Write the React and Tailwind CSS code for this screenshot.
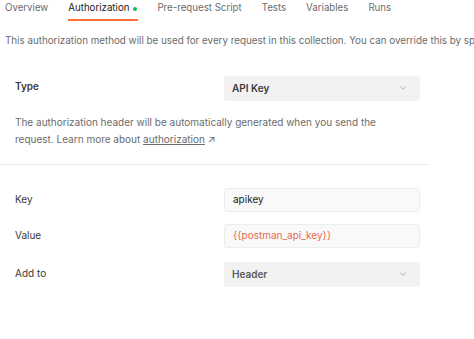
import { ChevronDown } from "lucide-react";

const tabs = ["Overview", "Authorization", "Pre-request Script", "Tests", "Variables", "Runs"];

function Select({ value, dark }) {
  return (
    <div className="flex items-center justify-between w-[196px] h-[25px] bg-[#f2f2f2] rounded-[3px] pl-[8px] pr-[12px]">
      <span className={dark ? "text-[10px] font-semibold text-[#3a3a3a]" : "text-[10px] font-semibold text-[#5a5a5a]"}>{value}</span>
      <ChevronDown size={10} strokeWidth={1.5} className="text-[#8a8a8a]" />
    </div>
  );
}

function Input({ value, orange }) {
  return (
    <div className="flex items-center w-[196px] h-[24px] bg-[#f9f9f9] border border-[#ededed] rounded-[3px] pl-[8px]">
      <span className={orange ? "text-[10px] text-[#e8694a]" : "text-[10px] text-[#212121]"}>{value}</span>
    </div>
  );
}

function Row({ label, className, children }) {
  return (
    <div className={"flex items-start " + (className || "")}>
      <span className="w-[224px] pl-[15px] pt-[4px] text-[10px] text-[#3a3a3a]">{label}</span>
      {children}
    </div>
  );
}

export default function App() {
  return (
    <div className="w-[474px] h-[339px] bg-white overflow-hidden font-['Inter',sans-serif]">
      <div className="flex h-[22px] pl-[5px] gap-[20px]">
        {tabs.map((t) => (
          <div key={t} className="relative flex items-start pt-[1px]">
            <span className={t === "Authorization" ? "text-[9.7px] text-[#212121]" : "text-[9.7px] text-[#6b6b6b]"}>{t}</span>
            {t === "Authorization" && (
              <>
                <span className="ml-[4px] mt-[6px] w-[4px] h-[4px] rounded-full bg-[#0cbb52]" />
                <span className="absolute left-0 right-[-1px] top-[19px] h-[2px] bg-[#ff6c37]" />
              </>
            )}
          </div>
        ))}
      </div>
      <p className="mt-[12px] pl-[5px] text-[9.8px] text-[#6b6b6b] whitespace-nowrap">
        This authorization method will be used for every request in this collection. You can override this by specifying one in the request.
      </p>
      <div className="w-[430px] border-b border-[#ededed] pb-[16px]">
        <div className="flex items-start mt-[27px]">
          <span className="w-[224px] pl-[15px] pt-[3px] text-[10px] font-semibold text-[#3a3a3a]">Type</span>
          <Select value="API Key" dark />
        </div>
        <p className="mt-[13px] pl-[15px] pr-[40px] text-[10px] leading-[17px] text-[#6b6b6b]">
          The authorization header will be automatically generated when you send the request. Learn more about{" "}
          <span className="underline">authorization</span> <span>↗</span>
        </p>
      </div>
      <div className="flex flex-col mt-[23px]">
        <Row label="Key">
          <Input value="apikey" />
        </Row>
        <Row label="Value" className="mt-[12px]">
          <Input value="{{postman_api_key}}" orange />
        </Row>
        <Row label="Add to" className="mt-[14px]">
          <Select value="Header" />
        </Row>
      </div>
    </div>
  );
}
